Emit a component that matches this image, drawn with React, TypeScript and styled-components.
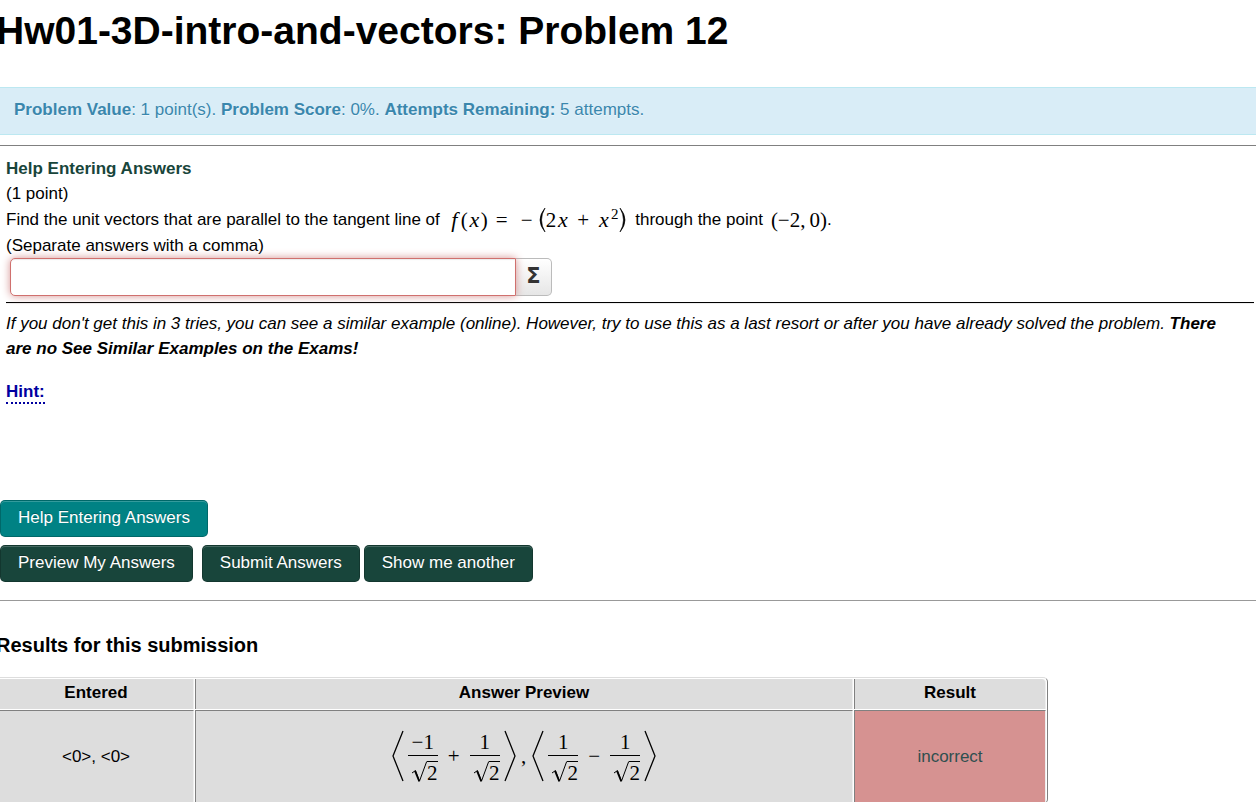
import React from "react";
import styled, { createGlobalStyle } from "styled-components";

const GlobalStyle = createGlobalStyle`
  *, *::before, *::after { box-sizing: border-box; }
  body {
    margin: 0;
    background: #fff;
    color: #000;
    font-family: "Liberation Sans", Arial, Helvetica, sans-serif;
    font-size: 17px;
    line-height: 25px;
  }
`;

const Page = styled.main`
  overflow-x: hidden;
`;

const Title = styled.h1`
  margin: 0 0 31px -4px;
  padding-top: 6px;
  font-size: 39px;
  line-height: 50px;
  font-weight: 700;
`;

const Notice = styled.div`
  padding: 10px 14px 12px;
  border: solid #bce8f1;
  border-width: 1px 0;
  background: #d9edf7;
  color: #3a87ad;
  line-height: 24px;
  text-shadow: 0 1px 0 rgba(255, 255, 255, 0.5);
`;

const Divider = styled.hr<{ $color: string; $gap: number }>`
  height: 1px;
  margin: ${(p) => p.$gap}px 0 0;
  border: 0;
  background: ${(p) => p.$color};
`;

const Problem = styled.section`
  padding: 10px 2px 0 6px;
`;

const HelpLink = styled.a`
  color: #18453b;
  font-weight: 700;
  text-decoration: none;
`;

const Line = styled.div`
  min-height: 25px;
`;

const FormulaLine = styled.div`
  display: flex;
  flex-wrap: wrap;
  align-items: center;
  min-height: 27px;
`;

const PromptLabel = styled.label`
  display: block;
`;

const AnswerRow = styled.div`
  display: flex;
  margin: 0 0 6px 4px;
`;

const AnswerInput = styled.input`
  width: 506px;
  height: 38px;
  padding: 4px 8px;
  border: 1px solid #d0706e;
  border-radius: 5px 0 0 5px;
  outline: 0;
  background: #fff;
  font: inherit;
  box-shadow: inset 0 1px 1px rgba(0, 0, 0, 0.08), 0 0 9px #d59392;
  z-index: 1;
`;

const SigmaButton = styled.button`
  width: 36px;
  height: 38px;
  padding: 0 0 2px;
  border: 1px solid #bbb;
  border-left: 0;
  border-radius: 0 5px 5px 0;
  background: linear-gradient(#fff, #e6e6e6);
  color: #333;
  font: 700 21px/34px "DejaVu Sans", sans-serif;
`;

const SectionRule = styled.hr`
  height: 2px;
  margin: 0 0 7px;
  border: 0;
  border-top: 1px solid #000;
  border-bottom: 1px solid #eee;
`;

const Remark = styled.p`
  margin: 0 0 18px;
  padding-right: 12px;
  font-style: italic;
`;

const HintLink = styled.a`
  display: inline-block;
  border-bottom: 2px dotted #0000a0;
  color: #0000a0;
  font-weight: 700;
  line-height: 21px;
  text-decoration: none;
`;

const Actions = styled.div`
  display: flex;
  flex-direction: column;
  align-items: flex-start;
  gap: 8px;
  padding-top: 96px;
`;

const ButtonRow = styled.div`
  display: flex;
  gap: 4px;
`;

const ActionButton = styled.button<{ $teal?: boolean; $spaced?: boolean }>`
  height: 37px;
  margin: 0 ${(p) => (p.$spaced ? 5 : 0)}px 0 0;
  padding: 0 17px 2px;
  border: 1px solid rgba(0, 0, 0, 0.2);
  border-radius: 5px;
  background: ${(p) => (p.$teal ? "#008284" : "#18453b")};
  color: #fff;
  font: inherit;
  box-shadow: inset 0 1px 0 rgba(255, 255, 255, 0.2);
  text-shadow: 0 -1px 0 rgba(0, 0, 0, 0.25);
`;

const ResultsTitle = styled.h2`
  margin: 32px 0 20px -4px;
  font-size: 20px;
  line-height: 24px;
`;

const Results = styled.table`
  width: 1052px;
  max-width: 100%;
  margin-left: -4px;
  border: 1px solid #ddd;
  border-right-color: #808080;
  border-radius: 5px;
  border-spacing: 1px;
  table-layout: fixed;
  text-align: center;
`;

const HeadCell = styled.th<{ $width?: number }>`
  width: ${(p) => (p.$width ? `${p.$width}px` : "auto")};
  height: 30px;
  padding: 0 0 4px;
  border-left: 1px solid #808080;
  border-right: 1px solid #eee;
  background: #ddd;

  &:last-child {
    border-top-right-radius: 4px;
  }
`;

const Cell = styled.td<{ $wrong?: boolean }>`
  height: 92px;
  padding: 0 0 1px;
  border-top: 1px solid #808080;
  border-left: 1px solid #808080;
  border-right: 1px solid #eee;
  background: ${(p) => (p.$wrong ? "#d69291" : "#ddd")};
  color: ${(p) => (p.$wrong ? "#2f4f4f" : "#000")};
`;

const Formula = styled.span<{ $last?: boolean }>`
  display: inline-flex;
  align-items: center;
  margin: 0 ${(p) => (p.$last ? 0 : 8)}px 0 8px;
  font: 21px/24px "Liberation Serif", "Times New Roman", serif;
  vertical-align: middle;
  white-space: nowrap;
`;

const Variable = styled.i`
  width: 13px;
  font-size: 22px;
  text-align: center;
`;

const Operator = styled.span<{ $gap?: number }>`
  width: 14px;
  margin: 0 ${(p) => p.$gap ?? 7}px;
  text-align: center;
`;

const Comma = styled.span<{ $gap: number }>`
  margin-right: ${(p) => p.$gap}px;
`;

const Power = styled.sup`
  align-self: flex-start;
  width: 9px;
  font-size: 15px;
  line-height: 15px;
  text-align: center;
`;

const Fraction = styled.span`
  display: flex;
  flex-direction: column;
  width: 30px;
  margin: 0 4px;
`;

const Numerator = styled.span`
  height: 26px;
  border-bottom: 1px solid #000;
  line-height: 24px;
  text-align: center;
`;

const Denominator = styled.span`
  display: flex;
  justify-content: flex-end;
  height: 27px;
  padding-top: 5px;
`;

const Radicand = styled.span`
  width: 11px;
  border-top: 1px solid #000;
  line-height: 23px;
`;

const TallParen = ({ close }: { close?: boolean }) => (
  <svg width="8" height="26" viewBox="0 0 8 26" aria-hidden="true">
    <path
      d={close ? "M1 1Q11 13 1 25Q8 13 1 1Z" : "M7 1Q-3 13 7 25Q0 13 7 1Z"}
      fill="#000"
      stroke="#000"
      strokeWidth="0.6"
    />
  </svg>
);

const Angle = ({ close }: { close?: boolean }) => (
  <svg width="12" height="52" viewBox="0 0 12 52" aria-hidden="true">
    <path
      d={close ? "M1 1L11 26L1 51" : "M11 1L1 26L11 51"}
      fill="none"
      stroke="#000"
      strokeWidth="1.3"
    />
  </svg>
);

const RootTwo = () => (
  <Denominator>
    <svg width="16" height="22" viewBox="0 0 16 22" aria-hidden="true">
      <path d="M1 12L4.5 9.5L8.5 20L15.7 0.5" fill="none" stroke="#000" strokeWidth="1" />
      <path d="M4 10L8.3 20.5" stroke="#000" strokeWidth="1.8" />
    </svg>
    <Radicand>2</Radicand>
  </Denominator>
);

const OverRootTwo = ({ top }: { top: string }) => (
  <Fraction>
    <Numerator>{top}</Numerator>
    <RootTwo />
  </Fraction>
);

export default function App() {
  return (
    <Page>
      <GlobalStyle />
      <Title>Hw01-3D-intro-and-vectors: Problem 12</Title>
      <Notice>
        <b>Problem Value</b>: 1 point(s). <b>Problem Score</b>: 0%. <b>Attempts Remaining:</b> 5
        attempts.
      </Notice>
      <Divider $color="#808080" $gap={10} />

      <Problem>
        <Line>
          <HelpLink href="#help">Help Entering Answers</HelpLink>
        </Line>
        <Line>(1 point)</Line>
        <FormulaLine>
          <span>Find the unit vectors that are parallel to the tangent line of</span>
          <Formula>
            <Variable>f</Variable>
            <span>(</span>
            <Variable>x</Variable>
            <span>)</span>
            <Operator>=</Operator>
            <Operator $gap={4}>−</Operator>
            <TallParen />
            <span>2</span>
            <Variable>x</Variable>
            <Operator>+</Operator>
            <Variable>x</Variable>
            <Power>2</Power>
            <TallParen close />
          </Formula>
          <span>through the point</span>
          <Formula $last>
            <span>(−2</span>
            <Comma $gap={4}>,</Comma>
            <span>0)</span>
          </Formula>
          <span>.</span>
        </FormulaLine>
        <PromptLabel htmlFor="answer">(Separate answers with a comma)</PromptLabel>
        <AnswerRow>
          <AnswerInput id="answer" type="text" />
          <SigmaButton type="button" aria-label="Equation editor">
            Σ
          </SigmaButton>
        </AnswerRow>
        <SectionRule />
        <Remark>
          If you don't get this in 3 tries, you can see a similar example (online). However, try to
          use this as a last resort or after you have already solved the problem.{" "}
          <b>There are no See Similar Examples on the Exams!</b>
        </Remark>
        <HintLink href="#hint">Hint:</HintLink>
      </Problem>

      <Actions>
        <ActionButton type="button" $teal>
          Help Entering Answers
        </ActionButton>
        <ButtonRow>
          <ActionButton type="button" $spaced>
            Preview My Answers
          </ActionButton>
          <ActionButton type="submit">Submit Answers</ActionButton>
          <ActionButton type="button">Show me another</ActionButton>
        </ButtonRow>
      </Actions>
      <Divider $color="#999" $gap={18} />

      <ResultsTitle>Results for this submission</ResultsTitle>
      <Results>
        <thead>
          <tr>
            <HeadCell $width={196}>Entered</HeadCell>
            <HeadCell>Answer Preview</HeadCell>
            <HeadCell $width={192}>Result</HeadCell>
          </tr>
        </thead>
        <tbody>
          <tr>
            <Cell>&lt;0&gt;, &lt;0&gt;</Cell>
            <Cell>
              <Formula>
                <Angle />
                <OverRootTwo top="−1" />
                <Operator $gap={5}>+</Operator>
                <OverRootTwo top="1" />
                <Angle close />
                <Comma $gap={6}>&nbsp;,</Comma>
                <Angle />
                <OverRootTwo top="1" />
                <Operator $gap={5}>−</Operator>
                <OverRootTwo top="1" />
                <Angle close />
              </Formula>
            </Cell>
            <Cell $wrong>incorrect</Cell>
          </tr>
        </tbody>
      </Results>
    </Page>
  );
}
